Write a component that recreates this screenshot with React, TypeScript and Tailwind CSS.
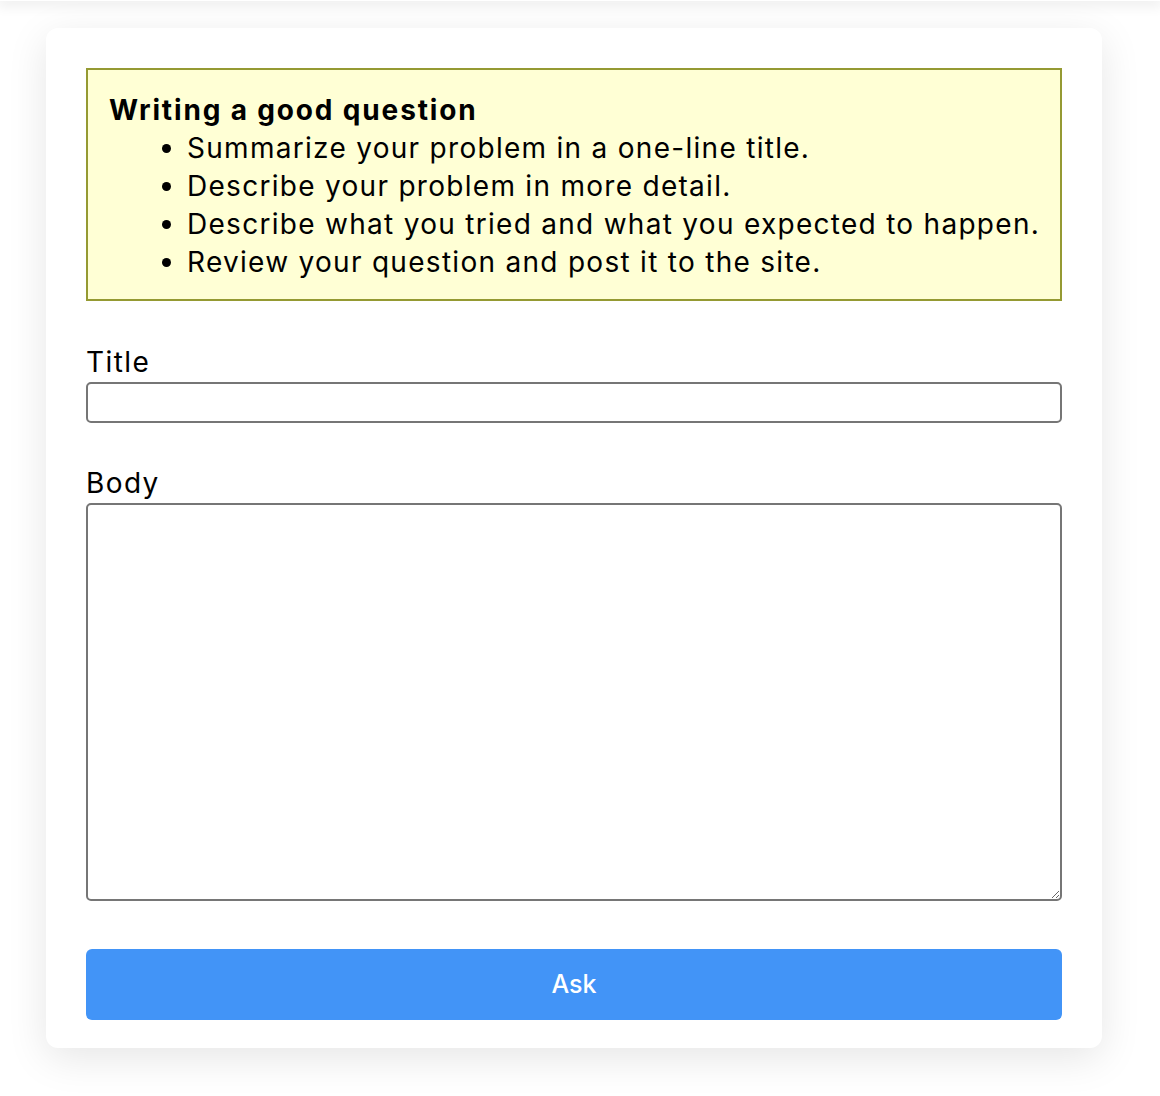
export default function App() {
  const tips = [
    "Summarize your problem in a one-line title.",
    "Describe your problem in more detail.",
    "Describe what you tried and what you expected to happen.",
    "Review your question and post it to the site.",
  ]

  return (
    <div className="min-h-[1096px] bg-white font-['Inter',sans-serif] text-black">
      <div className="h-px w-full shadow-[0_0_14px_3px_rgba(0,0,0,0.12)]" />
      <div className="px-[46px] pt-[27px]">
        <div className="w-[1056px] rounded-[12px] bg-white px-10 pt-10 pb-7 shadow-[0_10px_40px_rgba(0,0,0,0.1)]">
          <div className="border-2 border-[#959a32] bg-[#ffffd5] px-[21px] pt-[21px] pb-[18px] text-[28px] leading-[38px] tracking-[0.046em]">
            <h2 className="font-bold tracking-[0.066em]">Writing a good question</h2>
            <ul className="list-disc pl-[78px]">
              {tips.map((tip) => (
                <li key={tip} className="whitespace-nowrap">
                  {tip}
                </li>
              ))}
            </ul>
          </div>

          <form className="mt-[41px]">
            <label className="block text-[28px] leading-[40px] tracking-[0.05em]" htmlFor="title">
              Title
            </label>
            <input
              id="title"
              className="block h-[41px] w-full rounded-[5px] border-2 border-[#767676] px-2 text-[24px]"
            />

            <label className="mt-[40px] block text-[28px] leading-[40px] tracking-[0.05em]" htmlFor="body">
              Body
            </label>
            <textarea
              id="body"
              className="block h-[398px] w-full rounded-[5px] border-2 border-[#767676] px-2 text-[24px]"
            />

            <button
              type="button"
              className="mt-[48px] h-[71px] w-full rounded-[6px] bg-[#4294f7] text-[25px] font-medium text-white"
            >
              Ask
            </button>
          </form>
        </div>
      </div>
    </div>
  )
}
